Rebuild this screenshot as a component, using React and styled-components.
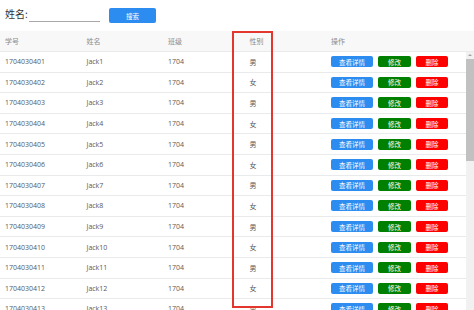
import React from 'react';
import styled, { createGlobalStyle } from 'styled-components';

const GlobalStyle = createGlobalStyle`
  html, body {
    margin: 0;
    padding: 0;
    background: #fff;
    font-family: "Open Sans", "Noto Sans CJK SC", sans-serif;
    overflow: hidden;
  }
`;

const Page = styled.div`
  position: relative;
  width: 474px;
  height: 310px;
`;

const SearchBar = styled.div`
  display: flex;
  align-items: center;
  height: 31px;
  padding-left: 5px;
  box-sizing: border-box;
`;

const Label = styled.span`
  font-family: "Noto Sans CJK SC", sans-serif;
  font-size: 10px;
  color: #333;
  margin-top: -5px;
  width: 24px;
`;

const SearchInput = styled.div`
  width: 71px;
  height: 1px;
  margin-top: 11px;
  background: #a8a8a8;
`;

const SearchButton = styled.div`
  display: flex;
  align-items: center;
  justify-content: center;
  width: 47px;
  height: 15px;
  margin-left: 9px;
  background: #2d8cf0;
  border-radius: 2px;
  color: #fff;
  font-family: "Noto Sans CJK SC", sans-serif;
  font-size: 6.5px;
`;

const Grid = styled.div`
  display: grid;
  grid-template-columns: 81.5px 81.5px 81.5px 81.5px 1fr;
  align-items: center;
  height: ${p => p.h}px;
  border-bottom: 1px solid #e8eaec;
  box-sizing: border-box;
  background: ${p => (p.head ? '#f8f8f9' : '#fff')};
  color: ${p => (p.head ? '#8c8c8c' : '#595959')};
  font-size: 7px;
`;

const Cell = styled.div`
  padding-left: 5px;
  white-space: nowrap;
  font-family: ${p => (p.cjk ? '"Noto Sans CJK SC", sans-serif' : '"Open Sans", sans-serif')};
`;

const BodyWrap = styled.div`
  display: flex;
  height: 258px;
  overflow: hidden;
`;

const RowList = styled.div`
  flex: 1;
`;

const ScrollTrack = styled.div`
  display: flex;
  flex-direction: column;
  align-items: center;
  width: 8px;
  background: #f1f1f1;
`;

const ArrowUp = styled.div`
  width: 0;
  height: 0;
  margin: 2px 0 2px;
  border-left: 2px solid transparent;
  border-right: 2px solid transparent;
  border-bottom: 2px solid #a3a3a3;
`;

const Thumb = styled.div`
  width: 8px;
  height: 102px;
  margin-top: 1px;
  background: #c1c1c1;
`;

const Actions = styled.div`
  display: flex;
  gap: 5px;
  padding-left: 5px;
`;

const ActionButton = styled.div`
  display: flex;
  align-items: center;
  justify-content: center;
  width: ${p => p.w}px;
  height: 11px;
  border-radius: 2px;
  background: ${p => p.color};
  color: #fff;
  font-family: "Noto Sans CJK SC", sans-serif;
  font-size: 6.5px;
`;

const Highlight = styled.div`
  position: absolute;
  left: 232px;
  top: 31px;
  width: 41px;
  height: 277px;
  border: 2px solid #e2362f;
  box-sizing: border-box;
  pointer-events: none;
`;

const rows = Array.from({ length: 13 }, (_, i) => ({
  id: `17040304${String(i + 1).padStart(2, '0')}`,
  name: `Jack${i + 1}`,
  cls: '1704',
  sex: i % 2 === 0 ? '男' : '女',
}));

export default function App() {
  return (
    <Page>
      <GlobalStyle />
      <SearchBar>
        <Label>姓名:</Label>
        <SearchInput />
        <SearchButton>搜索</SearchButton>
      </SearchBar>
      <Grid head h={21}>
        <Cell cjk>学号</Cell>
        <Cell cjk>姓名</Cell>
        <Cell cjk>班级</Cell>
        <Cell cjk>性别</Cell>
        <Cell cjk>操作</Cell>
      </Grid>
      <BodyWrap>
        <RowList>
          {rows.map(r => (
            <Grid key={r.id} h={20.6}>
              <Cell>{r.id}</Cell>
              <Cell>{r.name}</Cell>
              <Cell>{r.cls}</Cell>
              <Cell cjk>{r.sex}</Cell>
              <Actions>
                <ActionButton w={42} color="#2d8cf0">查看详情</ActionButton>
                <ActionButton w={33} color="#008000">修改</ActionButton>
                <ActionButton w={32} color="#ff0000">删除</ActionButton>
              </Actions>
            </Grid>
          ))}
        </RowList>
        <ScrollTrack>
          <ArrowUp />
          <Thumb />
        </ScrollTrack>
      </BodyWrap>
      <Highlight />
    </Page>
  );
}
